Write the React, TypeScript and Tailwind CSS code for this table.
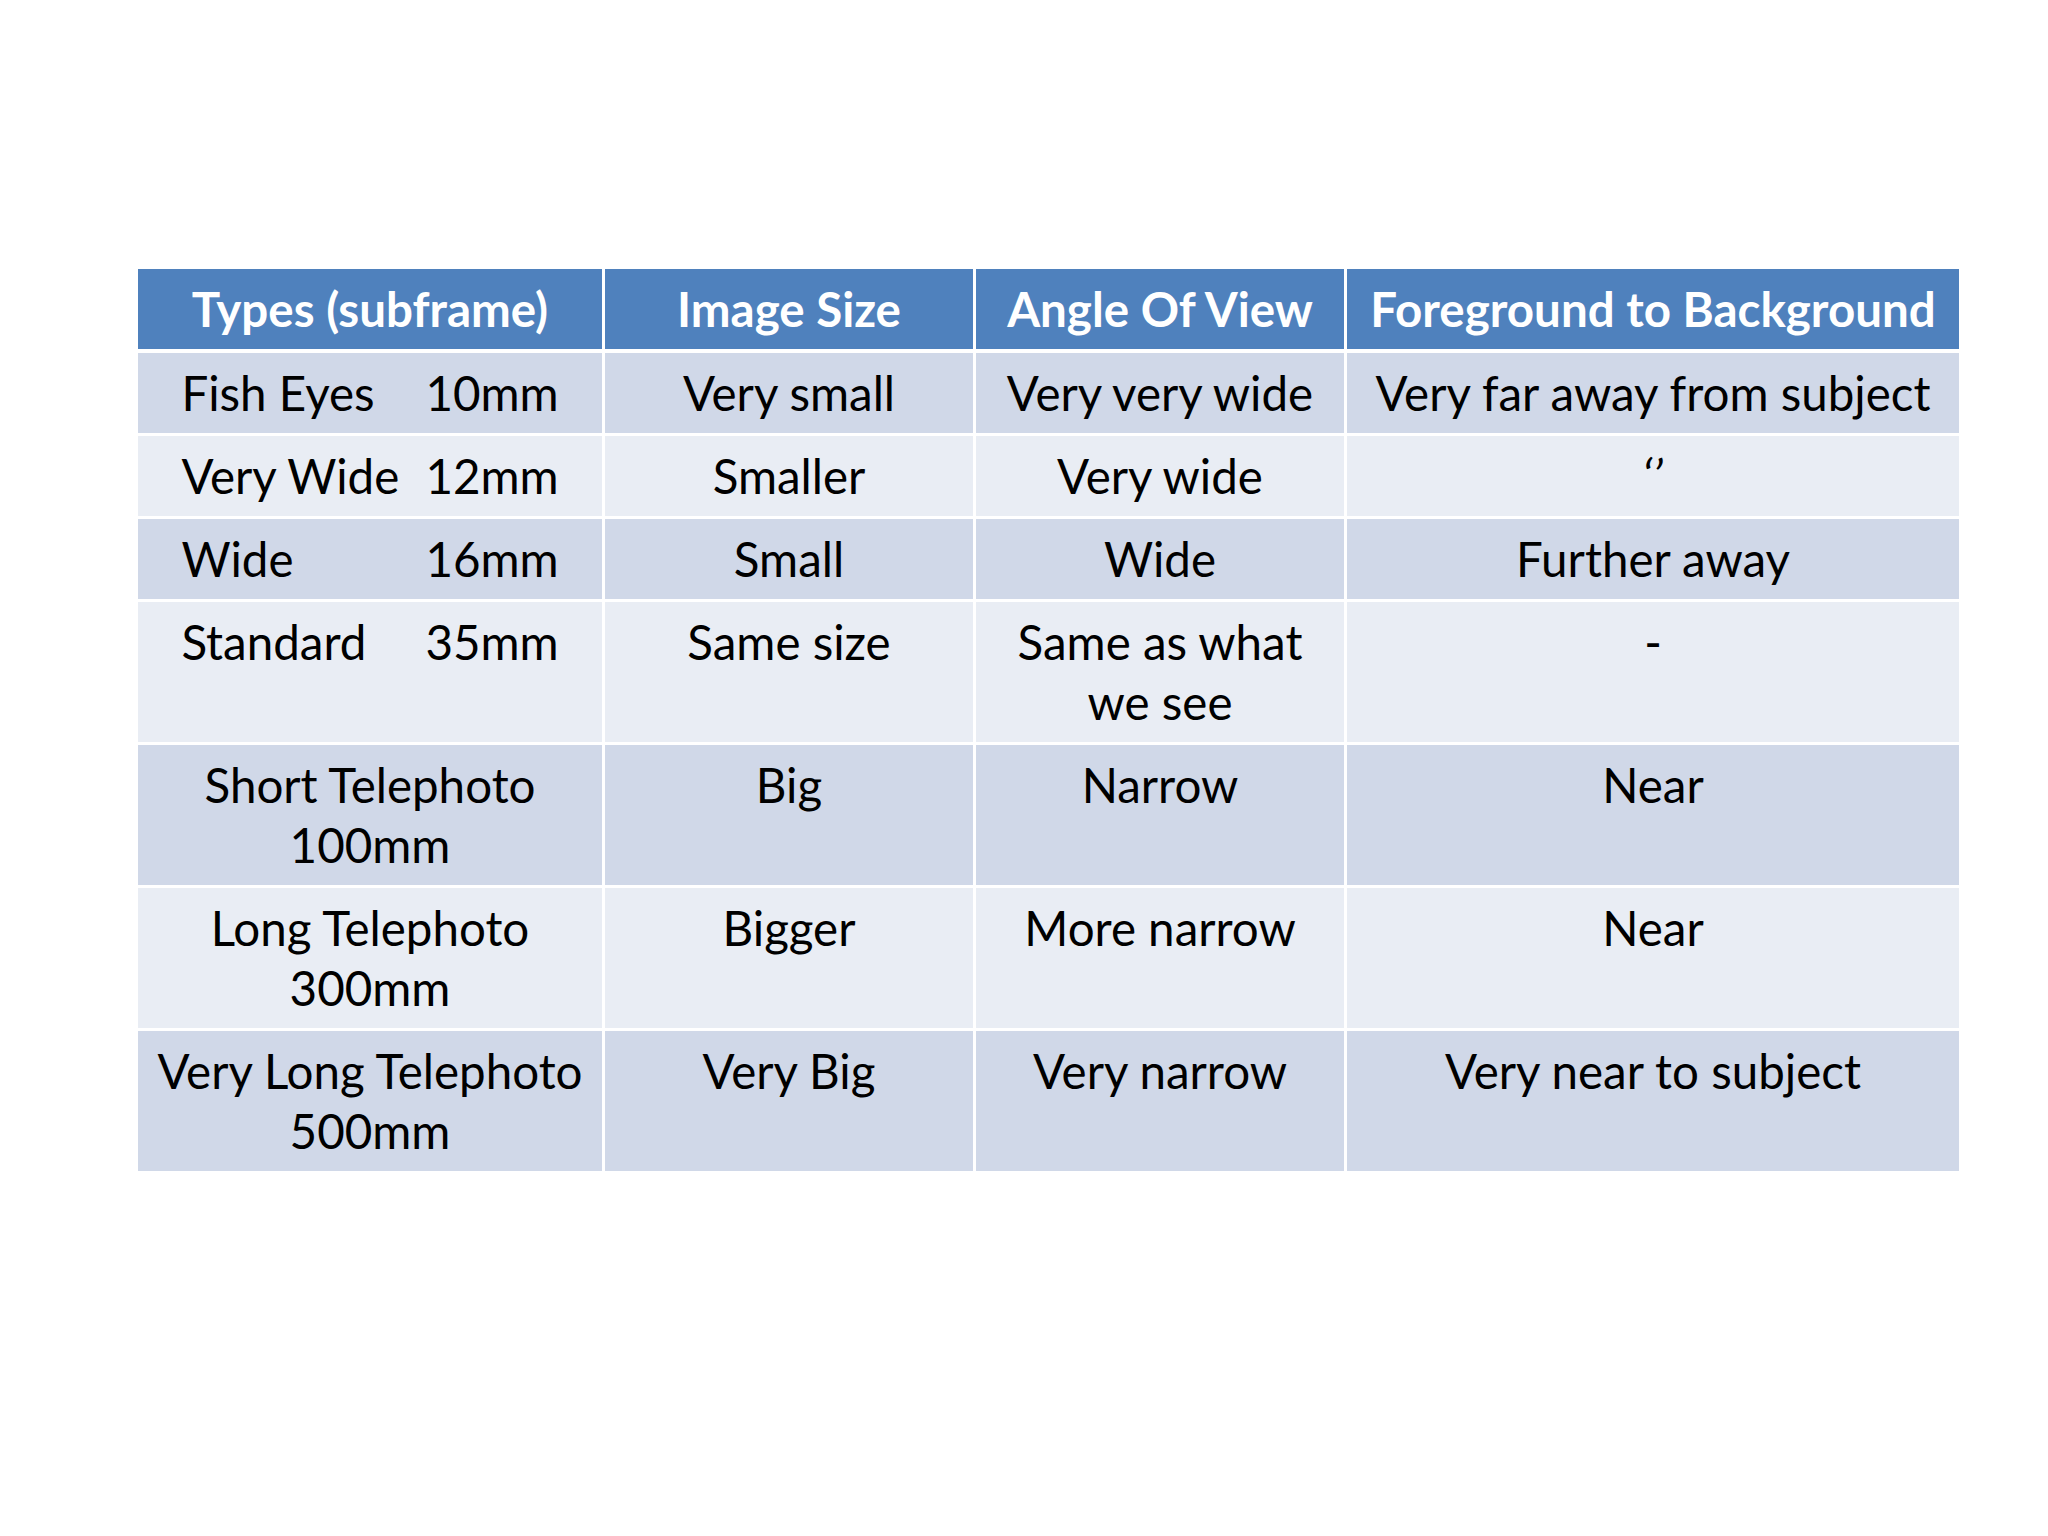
import React from 'react';

type Row = {
  type: React.ReactNode;
  size: string;
  angle: React.ReactNode;
  fg: React.ReactNode;
};

// first column: lens name + focal length laid out like a tab stop
function Split({ label, mm }: { label: string; mm: string }) {
  return (
    <span className="inline-grid grid-cols-[244px_auto] text-left">
      <span>{label}</span>
      <span>{mm}</span>
    </span>
  );
}

const rows: Row[] = [
  { type: <Split label="Fish Eyes" mm="10mm" />, size: 'Very small', angle: 'Very very wide', fg: 'Very far away from subject' },
  {
    type: <Split label="Very Wide" mm="12mm" />,
    size: 'Smaller',
    angle: 'Very wide',
    fg: <span className="italic tracking-[1px]">{'\u2018\u2019'}</span>,
  },
  { type: <Split label="Wide" mm="16mm" />, size: 'Small', angle: 'Wide', fg: 'Further away' },
  {
    type: <Split label="Standard" mm="35mm" />,
    size: 'Same size',
    angle: (
      <>
        Same as what
        <br />
        we see
      </>
    ),
    fg: '-',
  },
  {
    type: (
      <>
        Short Telephoto
        <br />
        100mm
      </>
    ),
    size: 'Big',
    angle: 'Narrow',
    fg: 'Near',
  },
  {
    type: (
      <>
        Long Telephoto
        <br />
        300mm
      </>
    ),
    size: 'Bigger',
    angle: 'More narrow',
    fg: 'Near',
  },
  {
    type: (
      <>
        Very Long Telephoto
        <br />
        500mm
      </>
    ),
    size: 'Very Big',
    angle: 'Very narrow',
    fg: 'Very near to subject',
  },
];

const cols = 'grid grid-cols-[464px_368px_368px_612px] gap-x-[3px]';

export default function App() {
  return (
    <div
      className="min-h-screen w-[2048px] h-[1536px] bg-white pl-[138px] pt-[269px]"
      style={{ fontFamily: 'Lato, "Open Sans", sans-serif' }}
    >
      <div className="w-[1821px]">
        {/* header */}
        <div className={`${cols} h-[78px] text-white font-bold text-[47.5px] leading-[80px]`}>
          <div className="bg-[#4f81bd] text-center">Types (subframe)</div>
          <div className="bg-[#4f81bd] text-center">Image Size</div>
          <div className="bg-[#4f81bd] text-center">Angle Of View</div>
          <div className="bg-[#4f81bd] text-center">Foreground to Background</div>
        </div>

        <div className="mt-[6px] flex flex-col gap-y-[3px] text-[47.5px] leading-[60px] text-black">
          {rows.map((r, i) => {
            const bg = i % 2 === 0 ? 'bg-[#d0d8e8]' : 'bg-[#e9edf4]';
            return (
              <div key={i} className={cols}>
                <div className={`${bg} text-center pt-[10px] pb-[10px]`}>{r.type}</div>
                <div className={`${bg} text-center pt-[10px] pb-[10px]`}>{r.size}</div>
                <div className={`${bg} text-center pt-[10px] pb-[10px]`}>{r.angle}</div>
                <div className={`${bg} text-center pt-[10px] pb-[10px]`}>{r.fg}</div>
              </div>
            );
          })}
        </div>
      </div>
    </div>
  );
}
